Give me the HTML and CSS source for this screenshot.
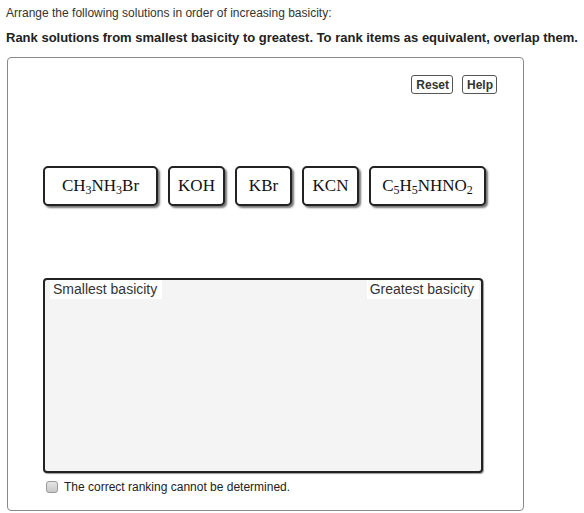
FILE: index.html
```html
<!DOCTYPE html>
<html>
<head>
<meta charset="utf-8">
<link rel="stylesheet" href="styles.css">
</head>
<body>
<p class="intro">Arrange the following solutions in order of increasing basicity:</p>
<p class="instr">Rank solutions from smallest basicity to greatest. To rank items as equivalent, overlap them.</p>
<div class="panel">
  <div class="toolbar">
    <button class="btn">Reset</button>
    <button class="btn">Help</button>
  </div>
  <div class="tiles">
    <div class="tile wide"><span>CH<sub>3</sub>NH<sub>3</sub>Br</span></div>
    <div class="tile"><span>KOH</span></div>
    <div class="tile"><span>KBr</span></div>
    <div class="tile"><span>KCN</span></div>
    <div class="tile wide2"><span>C<sub>5</sub>H<sub>5</sub>NHNO<sub>2</sub></span></div>
  </div>
  <div class="zone">
    <div class="zone-labels">
      <span class="label">Smallest basicity</span>
      <span class="label">Greatest basicity</span>
    </div>
  </div>
  <label class="check"><span class="box"></span><span>The correct ranking cannot be determined.</span></label>
</div>
</body>
</html>
```
FILE: styles.css
```css
html, body {
  margin: 0;
  padding: 0;
  background: #fff;
}
body {
  padding-left: 6px;
  font-family: Arial, "Liberation Sans", sans-serif;
  color: #333;
  width: 578px;
}
.intro {
  margin: 5px 0 0;
  font-size: 12px;
  line-height: 16px;
}
.instr {
  margin: 9px 0 0;
  font-size: 13px;
  font-weight: bold;
  line-height: 16px;
  color: #222;
  white-space: nowrap;
}
.panel {
  margin: 11px 0 0 1px;
  width: 515px;
  height: 452px;
  border: 1px solid #8a8a8a;
  border-radius: 4px;
  display: flex;
  flex-direction: column;
}
.toolbar {
  display: flex;
  justify-content: flex-end;
  gap: 9px;
  margin-top: 17px;
  padding-right: 26px;
}
.btn {
  font-family: Arial, "Liberation Sans", sans-serif;
  font-weight: bold;
  font-size: 12px;
  color: #333;
  background: #fff;
  border: 1px solid #555;
  border-radius: 3px;
  height: 19px;
  padding: 0 3px 0 4px;
  line-height: 16px;
}
.tiles {
  display: flex;
  gap: 10px;
  margin-top: 72px;
  padding-left: 35px;
}
.tile {
  box-sizing: border-box;
  width: 57px;
  height: 40px;
  border: 2px solid #222;
  border-radius: 5px;
  background: #fff;
  box-shadow: 2px 2px 2px #777;
  font-family: "Liberation Serif", "DejaVu Serif", serif;
  font-size: 17px;
  color: #111;
  display: flex;
  align-items: center;
  justify-content: center;
}
.tile.wide { width: 115px; }
.tile.wide2 { width: 117px; }
.tile span {
  line-height: 20px;
}
.tile sub {
  font-size: 12px;
  vertical-align: -3px;
  line-height: 0;
}
.zone {
  box-sizing: border-box;
  margin: 72px 0 0 35px;
  width: 440px;
  height: 195px;
  border: 2px solid #222;
  border-radius: 4px;
  background: #f4f4f4;
  box-shadow: 1px 1px 1px #999;
  padding: 0 2px 0 5px;
}
.zone-labels {
  display: flex;
  justify-content: space-between;
}
.label {
  background: #fff;
  font-size: 14px;
  line-height: 19px;
  padding: 0 5px 0 3px;
  color: #333;
}
.check {
  display: flex;
  align-items: center;
  gap: 6px;
  margin: 7px 0 0 38px;
  font-size: 12px;
  line-height: 14px;
  color: #222;
}
.box {
  box-sizing: border-box;
  width: 12px;
  height: 12px;
  border: 1px solid #999;
  border-radius: 3px;
  background: linear-gradient(#e4e4e4, #c8c8c8);
}
```
